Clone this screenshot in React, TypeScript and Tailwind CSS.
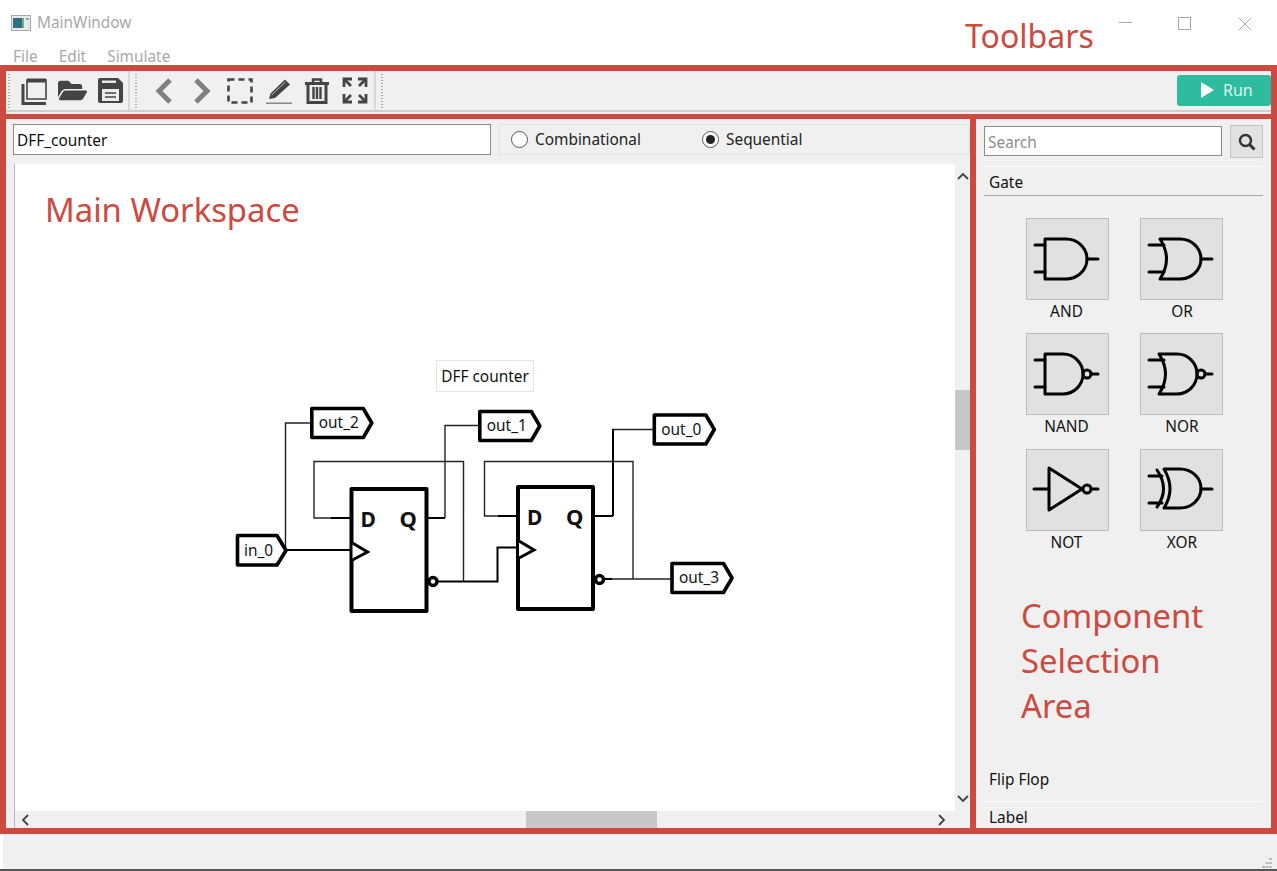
import React from "react";
import { FaFolderOpen } from "react-icons/fa";

const Handle = () => (
  <div className="w-[3px] h-[34px] mx-[2px] flex flex-col gap-[2px] overflow-hidden">
    {Array.from({ length: 12 }).map((_, i) => (
      <div key={i} className="w-[2px] h-[1px] bg-[#a8a8a8]" />
    ))}
  </div>
);

const Gate = ({ type }: { type: string }) => {
  const inputs = <path d="M9 27H19M9 54H19" />;
  return (
    <svg width="81" height="80" viewBox="1 1 81 80" fill="none" stroke="#000" strokeWidth="3" strokeLinejoin="round" strokeLinecap="round">
      {type === "AND" && (<>{inputs}<path d="M19 21H40A21 20 0 0 1 40 61H19Z" /><path d="M61 41H72" /></>)}
      {type === "OR" && (<><path d="M9 27H24M9 54H24" /><path d="M20 21H40A21 20 0 0 1 40 61H20Q33 41 20 21Z" /><path d="M61 41H72" /></>)}
      {type === "NAND" && (<>{inputs}<path d="M19 21H37A20 20 0 0 1 37 61H19Z" /><circle cx="61" cy="41" r="4" /><path d="M65 41H72" /></>)}
      {type === "NOR" && (<><path d="M9 27H24M9 54H24" /><path d="M19 21H37A20 20 0 0 1 37 61H19Q32 41 19 21Z" /><circle cx="61" cy="41" r="4" /><path d="M65 41H72" /></>)}
      {type === "NOT" && (<><path d="M8 40H23" /><path d="M23 19V61L56 40Z" /><circle cx="61" cy="40" r="4" /><path d="M65 40H72" /></>)}
      {type === "XOR" && (<><path d="M9 27H22M9 54H22" /><path d="M17 21Q30 40 17 58" /><path d="M24 20H40A21 19.500 0 0 1 40 59H24Q36 40 24 20Z" /><path d="M61 40H72" /></>)}
    </svg>
  );
};

const Tag = ({ x, y, label }: { x: number; y: number; label: string }) => (
  <g>
    <path d={`M${x} ${y - 14.5}H${x + 51.5}L${x + 60} ${y}L${x + 51.5} ${y + 14.5}H${x}Z`} fill="#fff" stroke="#000" strokeWidth="3.6" strokeLinejoin="round" />
    <text x={x + 7} y={y + 5} fontSize="15.4" fill="#111">{label}</text>
  </g>
);

const Flop = ({ x, y, dx }: { x: number; y: number; dx: number }) => (
  <g>
    <rect x={x} y={y} width="75" height="122" fill="#fff" stroke="#000" strokeWidth="4" strokeLinejoin="round" />
    <path d={`M${x + 1} ${y + 54}L${x + 16} ${y + 63}L${x + 1} ${y + 71}`} fill="#fff" stroke="#000" strokeWidth="3" />
    <text x={x + dx} y={y + 38} fontSize="21" fontWeight="700" fill="#111">D</text>
    <text x={x + dx + 39} y={y + 38} fontSize="22" fontWeight="700" fill="#111">Q</text>
    <circle cx={x + 81.5} cy={y + 92.5} r="4" fill="#fff" stroke="#000" strokeWidth="3.4" />
  </g>
);

const Diagram = () => (
  <svg width="940" height="647" viewBox="15 164 940 647" fill="none" className="absolute inset-0">
    <g stroke="#222" strokeWidth="1.4">
      <path d="M311 423H285.500V550" />
      <path d="M479 425.500H445V518" />
      <path d="M331 518H314V461.500H463.500V581" />
      <path d="M500 516H484.500V461.500H633V579" />
      <path d="M654 429.500H613V516" />
    </g>
    <g stroke="#000" strokeWidth="2">
      <path d="M286 550H352" />
      <path d="M428 518H445" />
      <path d="M331 518H350" />
      <path d="M498 516H517" />
      <path d="M438 581.500H497.500V547.500H517" />
      <path d="M595 516H613" />
      <path d="M613 516V429" />
      <path d="M603 579H612" />
    </g>
    <path d="M612 579H671" stroke="#222" strokeWidth="1.4" />
    <Flop x={351.5} y={489} dx={9} />
    <Flop x={518} y={487} dx={9} />
    <Tag x={311.8} y={423} label="out_2" />
    <Tag x={479.800} y={426} label="out_1" />
    <Tag x={654.300} y={429.500} label="out_0" />
    <Tag x={672} y={578} label="out_3" />
    <path d="M237.500 535.500H277L286 550.500L277 565H237.500Z" fill="#fff" stroke="#000" strokeWidth="3.6" strokeLinejoin="round" />
    <text x="244" y="556" fontSize="15.4" fill="#111">in_0</text>
  </svg>
);

const gates = ["AND", "OR", "NAND", "NOR", "NOT", "XOR"];

export default function App() {
  return (
    <div className="relative w-[1277px] h-[871px] overflow-hidden bg-white font-['Noto_Sans',sans-serif] text-[15.4px] text-[#111]">
      {/* title + menu */}
      <div className="h-[65px] relative">
        <div className="h-[46px] flex items-center pl-[11px]">
          <svg width="20" height="16" viewBox="0 0 20 16" className="mr-[6px] -mt-[1px]">
            <rect x="0.500" y="0.500" width="19" height="15" fill="#e8e8e8" stroke="#aaa" />
            <rect x="2" y="3" width="9" height="10" fill="#2f6f7f" />
            <rect x="11" y="3" width="2" height="10" fill="#6fae8f" />
            <rect x="15" y="3" width="3" height="2" fill="#8aa" />
          </svg>
          <span className="text-[#a9a9a9]">MainWindow</span>
        </div>
        <div className="h-[19px] pt-[2px] flex items-center pl-[13px] gap-[21px] text-[#a9a9a9]">
          <span>File</span>
          <span>Edit</span>
          <span>Simulate</span>
        </div>
        <div className="absolute left-[1119px] top-[22px] w-[13px] h-[1px] bg-[#a9a9a9]" />
        <div className="absolute left-[1178px] top-[17px] w-[13px] h-[13px] border border-[#a9a9a9]" />
        <svg className="absolute left-[1238px] top-[17px]" width="14" height="14" viewBox="0 0 14 14" stroke="#a9a9a9" strokeWidth="1"><path d="M1 1L13 13M13 1L1 13" /></svg>
        <div className="absolute left-[965px] top-[12px] text-[32px] leading-[48px] text-[#cc4a3f]">Toolbars</div>
      </div>

      {/* toolbar */}
      <div className="h-[54px] border-x-[6px] border-t-[6px] border-b-[5px] border-[#cc4a3f] bg-[#f0f0f0]">
        <div className="h-[41px] border-b-2 border-[#cfcfcf] flex items-center relative">
          <Handle />
          <div className="h-full flex items-center border-r-2 border-[#d8d8d8] w-[117px]">
            <svg className="ml-[7px]" width="28" height="28" viewBox="0 0 28 28" fill="none" stroke="#444"><path d="M7 3H26V22H7Z" strokeWidth="1.600" /><path d="M7 3.500H26" strokeWidth="4" /><path d="M3 7V26.500H26" strokeWidth="3" /></svg>
            <FaFolderOpen className="ml-[10px]" size={29} color="#444" />
            <svg className="ml-[10px]" width="27" height="27" viewBox="0 0 27 27">
              <path d="M1 3Q1 1 3 1H21L26 6V24Q26 26 24 26H3Q1 26 1 24Z" fill="#444" />
              <rect x="5" y="3.500" width="14" height="2.500" fill="#e8e8e8" />
              <rect x="5" y="12" width="17" height="12" fill="#ececec" />
              <path d="M8 16H19M8 20H19" stroke="#444" strokeWidth="1.600" />
            </svg>
          </div>
          <div className="ml-[3px]"><Handle /></div>
          <div className="h-full flex items-center border-r-2 border-[#d8d8d8] w-[236px]">
            <svg className="ml-[14px]" width="20" height="28" viewBox="0 0 20 28" fill="none" stroke="#808080" strokeWidth="5"><path d="M16 3L5 14L16 25" /></svg>
            <svg className="ml-[18px]" width="20" height="28" viewBox="0 0 20 28" fill="none" stroke="#808080" strokeWidth="5"><path d="M4 3L15 14L4 25" /></svg>
            <svg className="ml-[15px]" width="26" height="26" viewBox="0 0 26 26" fill="none" stroke="#444" strokeWidth="2.600" strokeDasharray="6 4"><rect x="1.500" y="1.500" width="23" height="23" /></svg>
            <svg className="ml-[12px]" width="28" height="28" viewBox="0 0 28 28" fill="none"><path d="M4 22L5.500 16.500L20 2.500L25 7.500L10 21Z" fill="#444" /><path d="M6.500 18L20.500 5" stroke="#bbb" strokeWidth="1" /><rect x="1" y="25.500" width="26" height="1.500" fill="#888" /></svg>
            <svg className="ml-[11px]" width="26" height="28" viewBox="0 0 26 28" fill="none" stroke="#444"><path d="M1 6.500H25" strokeWidth="3" /><path d="M9 6V2.500H17V6" strokeWidth="2.500" /><path d="M4 7V25.500H22V7" strokeWidth="3" /><path d="M9.500 10V22M13 10V22M16.500 10V22" strokeWidth="2.400" /></svg>
            <svg className="ml-[12px]" width="26" height="27" viewBox="0 0 26 27" fill="none" stroke="#444" strokeWidth="2.800"><path d="M2 10V2H10M16 2H24V10M2 17V25H10M24 17V25H16" /><path d="M3 3L9 9M23 3L17 9M3 24L9 18M23 24L17 18" /></svg>
          </div>
          <div className="ml-[3px]"><Handle /></div>
          <div className="ml-auto h-[31px] w-[94px] -mt-[1px] bg-[#2ebca1] rounded-[3px] flex items-center text-[#dff5ef] text-[16px]">
            <svg className="ml-[24px]" width="13" height="16" viewBox="0 0 13 16" fill="#fff"><path d="M0 0L13 8L0 16Z" /></svg>
            <span className="ml-[9px]">Run</span>
          </div>
        </div>
      </div>

      {/* main */}
      <div className="h-[715px] border-x-[6px] border-b-[6px] border-[#cc4a3f] bg-[#f0f0f0] flex">
        {/* workspace */}
        <div className="w-[964px] flex flex-col">
          <div className="h-[45px] flex pt-[5px] pl-[7px] shrink-0">
            <div className="w-[478px] h-[31px] bg-white border border-[#8a8a8a] pl-[3px] pt-[3px] flex items-center">DFF_counter</div>
            <div className="ml-[8px] flex-1 h-[31px] border border-[#e2e2e2] flex items-center relative pb-[1px]">
              <div className="ml-[11px] w-[17px] h-[17px] rounded-full border border-[#555] bg-white" />
              <span className="ml-[7px] mt-[2px] text-[#222]">Combinational</span>
              <div className="absolute left-[202px] w-[17px] h-[17px] rounded-full border border-[#555] bg-white flex items-center justify-center"><div className="w-[9px] h-[9px] rounded-full bg-[#222]" /></div>
              <span className="absolute left-[226px] mt-[2px] text-[#222]">Sequential</span>
            </div>
          </div>
          <div className="flex-1 flex">
            <div className="ml-[8px] w-[1px] bg-[#b4bac2]" />
            <div className="w-[940px] flex flex-col">
              <div className="relative h-[647px] bg-white">
                <Diagram />
                <div className="absolute left-[421px] top-[196px] w-[98px] h-[32px] border border-[#e4e4e4] bg-white flex items-center justify-center pt-[1px]">DFF counter</div>
                <div className="absolute left-[30px] top-[22px] text-[32.8px] leading-[48px] text-[#cc4a3f]">Main Workspace</div>
              </div>
              <div className="h-[17px] flex items-center relative">
                <svg className="absolute left-[6px]" width="8" height="12" viewBox="0 0 8 12" fill="none" stroke="#444" strokeWidth="1.800"><path d="M7 1L2 6L7 11" /></svg>
                <div className="ml-[511px] w-[131px] h-[17px] bg-[#c8c8c8]" />
                <svg className="absolute left-[923px]" width="8" height="12" viewBox="0 0 8 12" fill="none" stroke="#444" strokeWidth="1.800"><path d="M1 1L6 6L1 11" /></svg>
              </div>
            </div>
            <div className="w-[15px] flex flex-col items-center relative">
              <svg className="mt-[8px]" width="12" height="8" viewBox="0 0 12 8" fill="none" stroke="#444" strokeWidth="1.800"><path d="M1 7L6 2L11 7" /></svg>
              <div className="mt-[210px] w-[15px] h-[60px] bg-[#c8c8c8]" />
              <svg className="mt-[345px]" width="12" height="8" viewBox="0 0 12 8" fill="none" stroke="#444" strokeWidth="1.800"><path d="M1 1L6 6L11 1" /></svg>
            </div>
          </div>
        </div>
        <div className="w-[6px] bg-[#cc4a3f]" />
        {/* components */}
        <div className="flex-1 relative pl-[8px] pr-[8px] flex flex-col">
          <div className="flex pt-[7px] h-[47px] shrink-0">
            <div className="w-[238px] h-[30px] border border-[#8a8a8a] bg-white pl-[3px] pt-[3px] flex items-center text-[#8c8c8c]">Search</div>
            <div className="ml-[8px] w-[33px] h-[33px] -mt-[1px] bg-[#e1e1e1] border border-[#c4c4c4] flex items-center justify-center">
              <svg width="18" height="18" viewBox="0 0 18 18" fill="none" stroke="#333"><circle cx="7.500" cy="7.500" r="5.500" strokeWidth="2.400" /><path d="M11.500 11.500L16.500 16.500" strokeWidth="3" /></svg>
            </div>
          </div>
          <div className="border-t border-[#fbfbfb]" />
          <div className="h-[29px] pl-[5px] pt-[4px] flex items-center border-b border-[#a8a8a8] shrink-0">Gate</div>
          <div className="mt-[21.6px] ml-[42px] grid grid-cols-[83px_83px] gap-x-[31px] auto-rows-[115.5px]">
            {gates.map((g, i) => (
              <div key={g} className="flex flex-col items-center">
                <div className="w-[83px] h-[82px] bg-[#e1e1e1] border border-[#bdbdbd]"><Gate type={g} /></div>
                <div className={i % 2 ? "h-[20px] leading-[20px] mt-[2px] ml-[1px]" : "h-[20px] leading-[20px] mt-[2px] -ml-[2px]"}>{g}</div>
              </div>
            ))}
          </div>
          <div className="absolute left-[45px] top-[474px] text-[32.8px] leading-[45px] text-[#cc4a3f]">Component<br />Selection<br />Area</div>
          <div className="absolute left-[8px] right-[8px] top-[647px] h-[36px] pl-[5px] pb-[8px] flex items-center border-b border-[#fbfbfb]">Flip Flop</div>
          <div className="absolute left-[13px] top-[688px] h-[21px] overflow-hidden leading-[22px]">Label</div>
        </div>
      </div>

      {/* status */}
      <div className="ml-[3px] h-[35px] bg-[#f0f0f0] relative">
        <svg className="absolute right-[5px] bottom-[1px]" width="10" height="10" viewBox="0 0 10 10" fill="#bdbdbd"><rect x="7" y="0" width="3" height="2" /><rect x="3.500" y="4" width="3" height="2" /><rect x="7" y="4" width="3" height="2" /><rect x="0" y="8" width="3" height="2" /><rect x="3.500" y="8" width="3" height="2" /><rect x="7" y="8" width="3" height="2" /></svg>
      </div>
      <div className="h-[2px] bg-[#555]" />
    </div>
  );
}
